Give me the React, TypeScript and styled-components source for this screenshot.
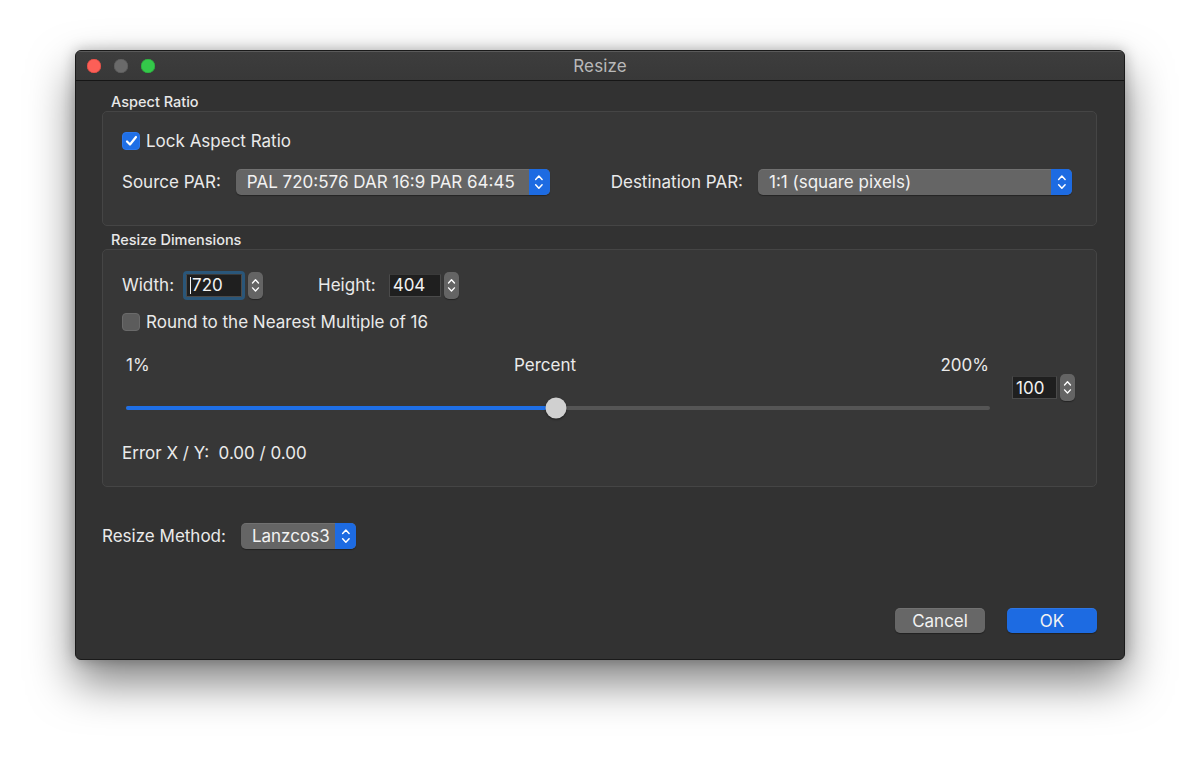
import React from 'react';
import styled, { createGlobalStyle } from 'styled-components';

const GlobalStyle = createGlobalStyle`
	html, body {
		margin: 0;
		padding: 0;
		background: #ffffff;
	}
	body {
		font-family: Inter, 'Noto Sans', 'Liberation Sans', sans-serif;
		-webkit-font-smoothing: antialiased;
	}
`;

const Chevrons = ({ size = 12 }: { size?: number }) => (
	<svg width={size * 0.75} height={size * 1.4} viewBox="0 0 9 17" fill="none">
		<path d="M1.5 6 L4.5 2.8 L7.5 6" stroke="#fff" strokeWidth="1.4" strokeLinecap="round" strokeLinejoin="round" />
		<path d="M1.5 11 L4.5 14.2 L7.5 11" stroke="#fff" strokeWidth="1.4" strokeLinecap="round" strokeLinejoin="round" />
	</svg>
);

const Check = () => (
	<svg width="13" height="12" viewBox="0 0 13 12" fill="none">
		<path d="M2 6.5 L5 9.5 L11 2" stroke="#fff" strokeWidth="2.2" strokeLinecap="round" strokeLinejoin="round" />
	</svg>
);

const App = () => {
	const min = 1;
	const max = 200;
	const percent = 100;
	const fraction = (percent - min) / (max - min);

	return (
		<>
			<GlobalStyle />
			<Desktop>
				<Window>
					<TitleBar>
						<Lights>
							<Light color="#fc5f57" border="#de4a41" />
							<Light color="#6a6a6a" border="#5a5a5a" />
							<Light color="#34c84a" border="#2aa93c" />
						</Lights>
						<Title>Resize</Title>
					</TitleBar>
					<Content>
						<GroupLabel>Aspect Ratio</GroupLabel>
						<GroupBox>
							<CheckRow>
								<CheckBox checked>
									<Check />
								</CheckBox>
								<Label>Lock Aspect Ratio</Label>
							</CheckRow>
							<ParRow>
								<FieldPair gap={15}>
									<Label>Source PAR:</Label>
									<PopUp width={314}>
										<PopUpText>PAL 720:576 DAR 16:9 PAR 64:45</PopUpText>
										<PopUpCap>
											<Chevrons size={13} />
										</PopUpCap>
									</PopUp>
								</FieldPair>
								<FieldPair gap={15}>
									<Label>Destination PAR:</Label>
									<PopUp width={314}>
										<PopUpText>1:1 (square pixels)</PopUpText>
										<PopUpCap>
											<Chevrons size={13} />
										</PopUpCap>
									</PopUp>
								</FieldPair>
							</ParRow>
						</GroupBox>

						<GroupLabel spaced>Resize Dimensions</GroupLabel>
						<GroupBox>
							<SizeRow>
								<FieldPair gap={9}>
									<Label>Width:</Label>
									<FocusRing>
										<NumberField width={56}>
											<Caret />
											720
										</NumberField>
									</FocusRing>
									<Stepper>
										<Chevrons size={12} />
									</Stepper>
								</FieldPair>
								<FieldPair gap={13}>
									<Label>Height:</Label>
									<NumberField width={52}>404</NumberField>
									<Stepper>
										<Chevrons size={12} />
									</Stepper>
								</FieldPair>
							</SizeRow>
							<CheckRow spaced>
								<CheckBox />
								<Label>Round to the Nearest Multiple of 16</Label>
							</CheckRow>
							<SliderRow>
								<SliderColumn>
									<SliderLabels>
										<Label>1%</Label>
										<Label>Percent</Label>
										<Label>200%</Label>
									</SliderLabels>
									<Track>
										<TrackFill style={{ width: `${fraction * 100}%` }} />
										<Thumb style={{ left: `${fraction * 100}%` }} />
									</Track>
								</SliderColumn>
								<FieldPair gap={0}>
									<NumberField width={45}>100</NumberField>
									<Stepper>
										<Chevrons size={12} />
									</Stepper>
								</FieldPair>
							</SliderRow>
							<ErrorRow>
								<Label>Error X / Y:&nbsp;&nbsp;0.00 / 0.00</Label>
							</ErrorRow>
						</GroupBox>

						<MethodRow>
							<Label>Resize Method:</Label>
							<PopUp width={115}>
								<PopUpText>Lanzcos3</PopUpText>
								<PopUpCap>
									<Chevrons size={13} />
								</PopUpCap>
							</PopUp>
						</MethodRow>

						<Footer>
							<PushButton>Cancel</PushButton>
							<PushButton primary>OK</PushButton>
						</Footer>
					</Content>
				</Window>
			</Desktop>
		</>
	);
};

const Desktop = styled.div`
	width: 1200px;
	height: 759px;
	box-sizing: border-box;
	padding: 50px 75px 0;
	background: #ffffff;
	overflow: hidden;
`;

const Window = styled.div`
	width: 1050px;
	height: 610px;
	box-sizing: border-box;
	display: flex;
	flex-direction: column;
	background: #323232;
	border: 1px solid #1a1a1a;
	border-radius: 6px;
	overflow: hidden;
	box-shadow: 0 22px 45px rgba(0, 0, 0, 0.5), 0 0 14px rgba(0, 0, 0, 0.25);
`;

const TitleBar = styled.div`
	height: 28px;
	flex: none;
	display: flex;
	align-items: center;
	justify-content: center;
	position: relative;
	background: linear-gradient(#3d3d3d, #383838);
	border-top: 1px solid #5a5a5a;
	border-bottom: 1px solid #161616;
	box-sizing: content-box;
`;

const Lights = styled.div`
	position: absolute;
	left: 11px;
	top: 7px;
	display: flex;
	gap: 13px;
`;

const Light = styled.span<{ color: string; border: string }>`
	width: 14px;
	height: 14px;
	border-radius: 50%;
	background: ${(p) => p.color};
	box-shadow: inset 0 0 0 0.5px ${(p) => p.border};
`;

const Title = styled.div`
	color: #b9b9b9;
	font-size: 17px;
	letter-spacing: 0.1px;
`;

const Content = styled.div`
	flex: 1;
	display: flex;
	flex-direction: column;
	padding: 12px 27px 26px 26px;
`;

const GroupLabel = styled.div<{ spaced?: boolean }>`
	height: 18px;
	line-height: 18px;
	padding-left: 9px;
	margin-top: ${(p) => (p.spaced ? '5px' : '0')};
	color: #e8e8e8;
	font-size: 14.5px;
	font-weight: 500;
`;

const GroupBox = styled.div`
	display: flex;
	flex-direction: column;
	padding: 19px 21px 24px 19px;
	background: #373737;
	border: 1px solid #454545;
	border-radius: 5px;
`;

const Label = styled.span`
	color: #eaeaea;
	font-size: 17px;
	line-height: 18px;
	white-space: nowrap;
`;

const CheckRow = styled.div<{ spaced?: boolean }>`
	display: flex;
	align-items: center;
	gap: 6px;
	height: 20px;
	margin-top: ${(p) => (p.spaced ? '12px' : '0')};
`;

const CheckBox = styled.span<{ checked?: boolean }>`
	width: 18px;
	height: 18px;
	box-sizing: border-box;
	border-radius: 4px;
	display: flex;
	align-items: center;
	justify-content: center;
	background: ${(p) => (p.checked ? '#1f6fe6' : '#5c5c5c')};
	border: 1px solid ${(p) => (p.checked ? '#2b78ee' : '#6a6a6a')};
`;

const ParRow = styled.div`
	display: flex;
	justify-content: space-between;
	align-items: center;
	margin-top: 18px;
	padding-right: 3px;
	margin-bottom: 6px;
`;

const FieldPair = styled.div<{ gap: number }>`
	display: flex;
	align-items: center;
	gap: 3px;

	& > ${Label} {
		margin-right: ${(p) => p.gap - 3}px;
	}
`;

const PopUp = styled.div<{ width: number }>`
	width: ${(p) => p.width}px;
	height: 26px;
	box-sizing: border-box;
	display: flex;
	align-items: stretch;
	border-radius: 5px;
	overflow: hidden;
	background: #656565;
	box-shadow: 0 1px 1px rgba(0, 0, 0, 0.35), inset 0 1px 0 rgba(255, 255, 255, 0.08);
`;

const PopUpText = styled.span`
	flex: 1;
	display: flex;
	align-items: center;
	padding-left: 11px;
	color: #f2f2f2;
	font-size: 17px;
	white-space: nowrap;
	overflow: hidden;
`;

const PopUpCap = styled.span`
	width: 21px;
	flex: none;
	display: flex;
	align-items: center;
	justify-content: center;
	background: #1d6be2;
`;

const SizeRow = styled.div`
	display: flex;
	align-items: center;
	gap: 55px;
	height: 30px;
	margin-top: 1px;
`;

const FocusRing = styled.div`
	padding: 3px;
	border-radius: 4px;
	background: #2a5679;
	display: flex;
`;

const NumberField = styled.div<{ width: number }>`
	width: ${(p) => p.width}px;
	height: 23px;
	box-sizing: border-box;
	display: flex;
	align-items: center;
	padding-left: 3px;
	background: #1f1f1f;
	border: 1px solid #4a4a4a;
	border-top-color: #3a3a3a;
	color: #f2f2f2;
	font-size: 17px;
`;

const Caret = styled.span`
	width: 1px;
	height: 17px;
	background: #f2f2f2;
	margin-right: 1px;
`;

const Stepper = styled.div`
	width: 15px;
	height: 27px;
	border-radius: 5px;
	display: flex;
	align-items: center;
	justify-content: center;
	background: #646464;
	box-shadow: 0 1px 1px rgba(0, 0, 0, 0.35);
`;

const SliderRow = styled.div`
	display: flex;
	align-items: center;
	gap: 18px;
	margin-top: 24px;
`;

const SliderColumn = styled.div`
	width: 873px;
	display: flex;
	flex-direction: column;
`;

const SliderLabels = styled.div`
	display: flex;
	justify-content: space-between;
	padding: 0 5px 0 4px;
`;

const Track = styled.div`
	position: relative;
	height: 4px;
	margin: 32px 4px 9px;
	border-radius: 2px;
	background: #555555;
`;

const TrackFill = styled.div`
	height: 100%;
	border-radius: 2px;
	background: #1f6fe6;
`;

const Thumb = styled.div`
	position: absolute;
	top: 50%;
	width: 21px;
	height: 21px;
	border-radius: 50%;
	transform: translate(-50%, -50%);
	background: #d0d0d0;
	box-shadow: 0 1px 2px rgba(0, 0, 0, 0.5);
`;

const ErrorRow = styled.div`
	margin-top: 25px;
	display: flex;
`;

const MethodRow = styled.div`
	display: flex;
	align-items: center;
	margin-top: 36px;

	& > ${Label} {
		margin-right: 15px;
	}
`;

const Footer = styled.div`
	margin-top: auto;
	display: flex;
	justify-content: flex-end;
	gap: 22px;
`;

const PushButton = styled.button<{ primary?: boolean }>`
	width: 90px;
	height: 25px;
	border: none;
	border-radius: 5px;
	font-family: inherit;
	font-size: 17px;
	color: #f2f2f2;
	background: ${(p) => (p.primary ? '#1d6be2' : '#676767')};
	box-shadow: 0 1px 1px rgba(0, 0, 0, 0.35), inset 0 1px 0 rgba(255, 255, 255, 0.08);
	padding: 0;
`;

export default App;
